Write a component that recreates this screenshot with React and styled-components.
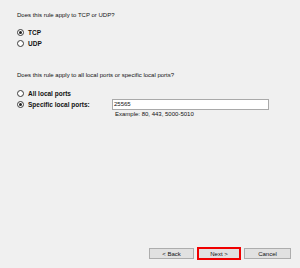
import React from "react";
import styled, { createGlobalStyle } from "styled-components";

const Global = createGlobalStyle`
  body {
    margin: 0;
    background: #f0f0f0;
  }
`;

const Page = styled.div`
  width: 300px;
  height: 268px;
  box-sizing: border-box;
  background: #f0f0f0;
  font-family: "Liberation Sans", Arial, sans-serif;
  font-size: 6px;
  color: #111;
  display: flex;
  flex-direction: column;
  padding: 12px 9px 9px 17px;
`;

const Question = styled.div`
  height: 7px;
  line-height: 7px;
  margin-top: ${(p) => p.top || 0}px;
  margin-bottom: ${(p) => p.gap}px;
`;

const Options = styled.div`
  display: flex;
  flex-direction: column;
  gap: 3px;
`;

const Row = styled.label`
  display: flex;
  align-items: center;
  height: 8px;
`;

const Radio = styled.span`
  width: 7px;
  height: 7px;
  box-sizing: border-box;
  border-radius: 50%;
  border: 1px solid #3a3a3a;
  background: #fff;
  display: flex;
  align-items: center;
  justify-content: center;
  margin-right: 4px;
  flex-shrink: 0;

  &::after {
    content: "";
    width: 3px;
    height: 3px;
    border-radius: 50%;
    background: ${(p) => (p.checked ? "#222" : "transparent")};
  }
`;

const Label = styled.span`
  font-weight: bold;
  font-size: 6.5px;
  width: ${(p) => (p.width ? `${p.width}px` : "auto")};
  flex-shrink: 0;
`;

const PortInput = styled.div`
  width: 157px;
  height: 11px;
  box-sizing: border-box;
  background: #fff;
  border: 1px solid #a9a9a9;
  display: flex;
  align-items: center;
  padding-left: 1px;
`;

const Hint = styled.div`
  margin-left: 98px;
  margin-top: 3px;
  line-height: 7px;
`;

const Spacer = styled.div`
  flex: 1;
`;

const Buttons = styled.div`
  display: flex;
  justify-content: flex-end;
  align-items: center;
`;

const Button = styled.div`
  width: ${(p) => p.width}px;
  height: 11px;
  box-sizing: border-box;
  background: #e1e1e1;
  border: 1px solid ${(p) => (p.highlight ? "#f00000" : "#adadad")};
  box-shadow: ${(p) => (p.highlight ? "0 0 0 1px #f00000" : "none")};
  display: flex;
  align-items: center;
  justify-content: center;
  margin-left: ${(p) => p.gap}px;
`;

export default function App() {
  return (
    <Page>
      <Global />
      <Question gap={9}>Does this rule apply to TCP or UDP?</Question>
      <Options>
        <Row>
          <Radio checked />
          <Label>TCP</Label>
        </Row>
        <Row>
          <Radio />
          <Label>UDP</Label>
        </Row>
      </Options>

      <Question top={25} gap={10}>
        Does this rule apply to all local ports or specific local ports?
      </Question>
      <Options>
        <Row>
          <Radio />
          <Label>All local ports</Label>
        </Row>
        <Row>
          <Radio checked />
          <Label width={84}>Specific local ports:</Label>
          <PortInput>25565</PortInput>
        </Row>
      </Options>
      <Hint>Example: 80, 443, 5000-5010</Hint>

      <Spacer />
      <Buttons>
        <Button width={45} gap={0}>&lt; Back</Button>
        <Button width={42} gap={4} highlight>Next &gt;</Button>
        <Button width={47} gap={4}>Cancel</Button>
      </Buttons>
    </Page>
  );
}
